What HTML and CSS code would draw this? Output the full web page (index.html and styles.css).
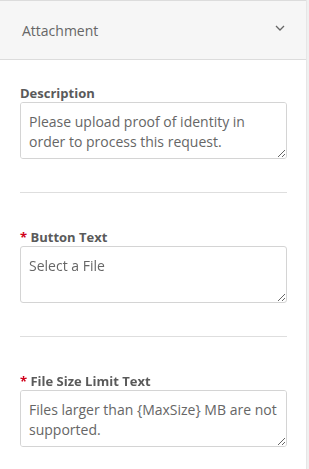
FILE: index.html
```html
<!DOCTYPE html>
<html lang="en">
<head>
    <meta charset="UTF-8">
    <meta name="viewport" content="width=device-width, initial-scale=1.0">
    <title>Attachment</title>
    <link rel="stylesheet" href="styles.css">
</head>
<body>
    <div class="panel">
        <div class="panel-header">
            <span class="panel-title">Attachment</span>
            <svg class="chevron" width="10" height="6" viewBox="0 0 10 6">
                <path d="M1 1 L5 5 L9 1" fill="none" stroke="#666" stroke-width="1.3"/>
            </svg>
        </div>

        <div class="panel-body">
            <div class="field">
                <label class="field-label">Description</label>
                <textarea class="field-input">Please upload proof of identity in order to process this request.</textarea>
            </div>
            <hr class="divider">

            <div class="field">
                <label class="field-label"><span class="req">*</span> Button Text</label>
                <textarea class="field-input">Select a File</textarea>
            </div>
            <hr class="divider">

            <div class="field">
                <label class="field-label"><span class="req">*</span> File Size Limit Text</label>
                <textarea class="field-input">Files larger than {MaxSize} MB are not supported.</textarea>
            </div>
        </div>
    </div>
</body>
</html>
```

FILE: styles.css
```css
body {
    margin: 0;
    padding: 0;
    font-family: 'Open Sans', 'Liberation Sans', sans-serif;
    background-color: #f0f0f0;
    color: #555;
}
.panel {
    width: 307px;
    min-height: 469px;
    background-color: #fff;
    border-right: 1px solid #e6e6e6;
    box-sizing: border-box;
}
.panel-header {
    display: flex;
    align-items: center;
    justify-content: space-between;
    height: 60px;
    box-sizing: border-box;
    padding: 0 21px 0 22px;
    background-color: #f6f6f6;
    border-top: 1px solid #dcdcdc;
    border-bottom: 1px solid #dcdcdc;
}
.panel-title {
    font-size: 14px;
    color: #666;
    padding-top: 1px;
}
.chevron {
    margin-top: -5px;
}

.panel-body {
    padding: 25px 20px 0 20px;
}
.field {
    display: flex;
    flex-direction: column;
}
.field-label {
    font-size: 13px;
    font-weight: bold;
    color: #5a5a5a;
    line-height: 16px;
    margin-bottom: 1px;
}
.req {
    color: #d0021b;
}
.field-input {
    width: 267px;
    height: 57px;
    box-sizing: border-box;
    padding: 9px 8px 7px 8px;
    font-family: 'Open Sans', 'Liberation Sans', sans-serif;
    font-size: 14px;
    line-height: 20px;
    color: #666;
    border: 1px solid #d4d4d4;
    border-radius: 3px;
    resize: vertical;
    margin: 0;
}
.divider {
    width: 267px;
    margin: 33px 0 36px 0;
    border: 0;
    border-top: 1px solid #dedede;
}
```
